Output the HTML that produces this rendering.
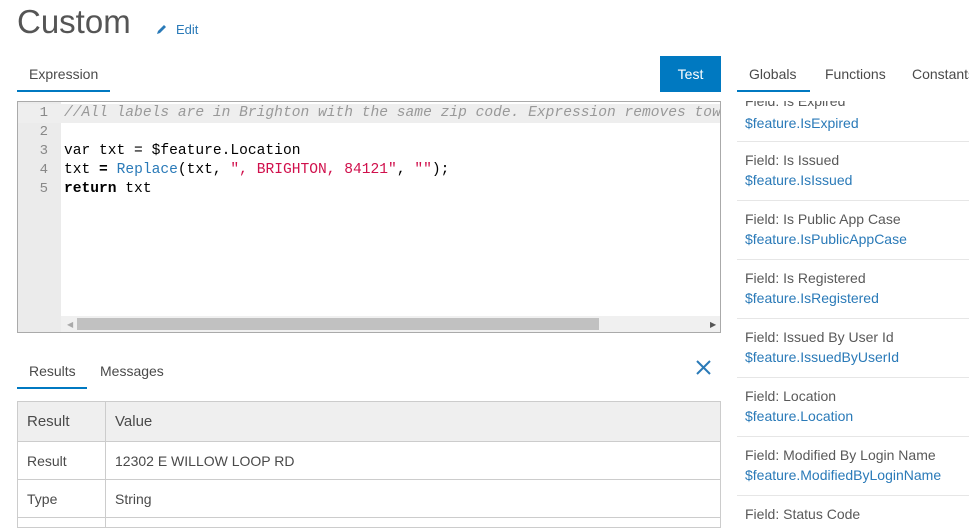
<!DOCTYPE html>
<html><head><style>
*{margin:0;padding:0;box-sizing:border-box}
body{width:969px;height:524px;overflow:hidden;background:#fff;font-family:"Liberation Sans",sans-serif;color:#323232;position:relative}
.a{position:absolute}
.ln{position:absolute;left:0;width:43px;text-align:right;padding-right:13px;color:#888;font-size:14px;font-family:"Liberation Mono",monospace}
.cl{position:absolute;left:46px;white-space:pre;font-family:"Liberation Mono",monospace;font-size:14.6px;color:#000}
.it{position:absolute;left:745px;font-size:14px}
.it .f{color:#595959}
.it .v{color:#2a7ab8;margin-top:4px}
.sep{position:absolute;left:737px;width:232px;height:1px;background:#e6e6e6}
td{border:1px solid #ccc;padding-left:9px;font-size:14px;color:#4a4a4a}
</style></head><body>
<div class="a" style="left:17px;top:3px;font-size:33px;color:#555">Custom</div>
<svg class="a" style="left:156px;top:23px" width="12" height="12" viewBox="0 0 12 12"><path d="M1 11 L2 8 L8 2 L10 4 L4 10 Z" fill="#2a7ab8"/></svg>
<div class="a" style="left:176px;top:22px;font-size:13px;color:#2a7ab8">Edit</div>
<div class="a" style="left:29px;top:66px;font-size:14px;color:#4a4a4a">Expression</div>
<div class="a" style="left:17px;top:90px;width:93px;height:2px;background:#0079c1"></div>
<div class="a" style="left:660px;top:56px;width:61px;height:36px;background:#0079c1;color:#fff;font-size:14px;text-align:center;line-height:36px">Test</div>
<div class="a" style="left:17px;top:101px;width:704px;height:232px;border:1px solid #aaa;overflow:hidden">
 <div class="a" style="left:0;top:0;width:43px;height:231px;background:#ebebeb"></div>
 <div class="a" style="left:0;top:2px;width:703px;height:19px;background:#eeeeee"></div>
 <div class="ln" style="top:3px">1</div><div class="ln" style="top:22px">2</div><div class="ln" style="top:41px">3</div><div class="ln" style="top:60px">4</div><div class="ln" style="top:79px">5</div>
 <div class="cl" style="top:3px;color:#999;font-style:italic">//All labels are in Brighton with the same zip code. Expression removes town</div>
 <div class="cl" style="top:41px">var txt = $feature.Location</div>
 <div class="cl" style="top:60px">txt <b>=</b> <span style="color:#2a7ab8">Replace</span>(txt, <span style="color:#d0104c">", BRIGHTON, 84121"</span>, <span style="color:#d0104c">""</span>);</div>
 <div class="cl" style="top:79px"><b>return</b> txt</div>
 <div class="a" style="left:43px;top:214px;width:660px;height:17px;background:#f0f0f0"></div>
 <div class="a" style="left:59px;top:216px;width:522px;height:12px;background:#c1c1c1"></div>
 <div class="a" style="left:49px;top:218px;font-size:8px;color:#aaa">◀</div>
 <div class="a" style="left:692px;top:218px;font-size:8px;color:#555">▶</div>
</div>
<div class="a" style="left:29px;top:363px;font-size:14px;color:#4a4a4a">Results</div>
<div class="a" style="left:100px;top:363px;font-size:14px;color:#4a4a4a">Messages</div>
<div class="a" style="left:17px;top:387px;width:70px;height:2px;background:#0079c1"></div>
<svg class="a" style="left:696px;top:360px" width="15" height="15" viewBox="0 0 15 15"><path d="M1 1 L14 14 M14 1 L1 14" stroke="#2a7ab8" stroke-width="2"/></svg>
<table class="a" style="left:17px;top:401px;width:704px;border-collapse:collapse">
<tr style="height:40px;background:#efefef"><td style="width:88px;font-size:15px">Result</td><td style="font-size:15px">Value</td></tr>
<tr style="height:38px"><td>Result</td><td>12302 E WILLOW LOOP RD</td></tr>
<tr style="height:38px"><td>Type</td><td>String</td></tr>
<tr style="height:10px"><td></td><td></td></tr>
</table>
<div class="a" style="left:749px;top:66px;font-size:14px;color:#4a4a4a">Globals</div>
<div class="a" style="left:825px;top:66px;font-size:14px;color:#4a4a4a">Functions</div>
<div class="a" style="left:912px;top:66px;font-size:14px;color:#4a4a4a;white-space:nowrap">Constants</div>
<div class="a" style="left:737px;top:90px;width:73px;height:2px;background:#0079c1"></div>
<div class="a" style="left:737px;top:101px;width:232px;height:423px;overflow:hidden">
 <div class="a" style="left:8px;top:-8px;font-size:14px;color:#595959">Field: Is Expired</div>
 <div class="a" style="left:8px;top:14px;font-size:14px;color:#2a7ab8">$feature.IsExpired</div>
</div>
<div class="sep" style="top:141px"></div>
<div class="it" style="top:152px"><div class="f">Field: Is Issued</div><div class="v">$feature.IsIssued</div></div>
<div class="sep" style="top:200px"></div>
<div class="it" style="top:211px"><div class="f">Field: Is Public App Case</div><div class="v">$feature.IsPublicAppCase</div></div>
<div class="sep" style="top:259px"></div>
<div class="it" style="top:270px"><div class="f">Field: Is Registered</div><div class="v">$feature.IsRegistered</div></div>
<div class="sep" style="top:318px"></div>
<div class="it" style="top:329px"><div class="f">Field: Issued By User Id</div><div class="v">$feature.IssuedByUserId</div></div>
<div class="sep" style="top:377px"></div>
<div class="it" style="top:388px"><div class="f">Field: Location</div><div class="v">$feature.Location</div></div>
<div class="sep" style="top:436px"></div>
<div class="it" style="top:447px"><div class="f">Field: Modified By Login Name</div><div class="v">$feature.ModifiedByLoginName</div></div>
<div class="sep" style="top:495px"></div>
<div class="it" style="top:506px"><div class="f">Field: Status Code</div></div>
</body></html>
